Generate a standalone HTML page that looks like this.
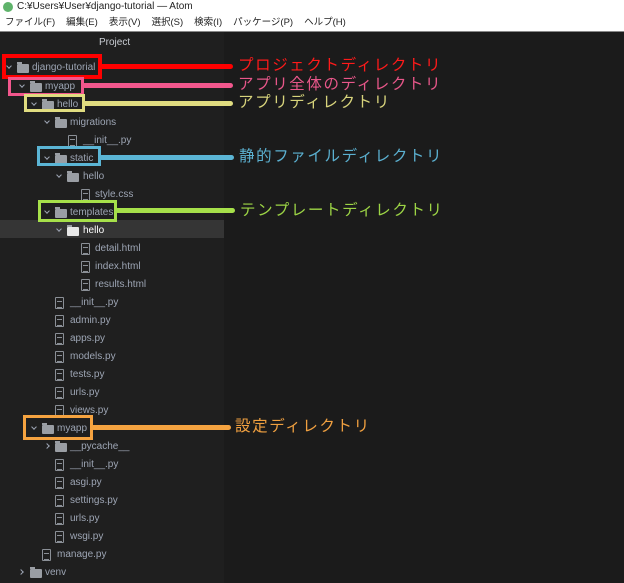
<!DOCTYPE html>
<html><head><meta charset="utf-8"><style>
*{margin:0;padding:0;box-sizing:border-box}
body{width:624px;height:583px;overflow:hidden;background:#1b1b1b;font-family:"Liberation Sans","Noto Sans CJK JP",sans-serif;position:relative}
#title{position:absolute;left:0;top:0;width:624px;height:14px;background:#fff;font-size:10px;color:#222;line-height:14px;padding-left:17px}
#logo{position:absolute;left:3px;top:2px;width:10px;height:10px;border-radius:50%;background:#5fb36b}
#menu{position:absolute;left:0;top:14px;width:624px;height:17px;background:#fff;font-size:9.5px;color:#222;line-height:17px;padding-left:5px;word-spacing:0}
#menu span{margin-right:11px}
#line{position:absolute;left:0;top:31px;width:624px;height:1px;background:#888}
#side{position:absolute;left:0;top:32px;width:224px;height:551px;background:#1f1f1f}
#proj{position:absolute;left:99px;top:37px;font-size:10px;color:#c8ccd2}
.r{position:absolute;height:18px;font-size:10px;color:#9da5b4;line-height:18px;white-space:nowrap;margin-top:2px}
.a{position:absolute;width:4px;height:4px;border-right:1.5px solid #9da5b4;border-bottom:1.5px solid #9da5b4;transform:rotate(45deg);margin-top:1px;margin-left:1px}
.a.c{transform:rotate(-45deg);margin-top:2px}
.f{position:absolute;width:12px;height:9px;background:#9a9ea4;border-radius:1px;margin-top:1px}
.f:before{content:"";position:absolute;left:0;top:-2px;width:5px;height:2px;background:#9a9ea4}
.d{position:absolute;width:9px;height:12px;border:1.3px solid #8a8f96;border-radius:1px;margin-top:1px}
.d:after{content:"";position:absolute;left:1px;top:3px;width:5px;height:5px;border-top:1px solid #8a8f96;border-bottom:1px solid #8a8f96}
.box{position:absolute;border-style:solid}
.ln{position:absolute;height:5px;border-radius:3px}
.lab{position:absolute;font-size:15.5px;letter-spacing:1.6px;white-space:nowrap;line-height:18px}
#hl{position:absolute;left:0;top:220px;width:224px;height:18px;background:#353535}
</style></head><body>
<div id="title"><div id="logo"></div>C:¥Users¥User¥django-tutorial — Atom</div>
<div id="menu"><span>ファイル(F)</span><span>編集(E)</span><span>表示(V)</span><span>選択(S)</span><span>検索(I)</span><span>パッケージ(P)</span><span>ヘルプ(H)</span></div>
<div id="line"></div>
<div id="side"></div>
<div id="hl"></div>
<div id="proj">Project</div>

<div class="a" style="left:6px;top:63px"></div><div class="f" style="left:17px;top:63px"></div><div class="r" style="left:32px;top:57px">django-tutorial</div>
<div class="a" style="left:19px;top:82px"></div><div class="f" style="left:30px;top:82px"></div><div class="r" style="left:45px;top:76px">myapp</div>
<div class="a" style="left:31px;top:100px"></div><div class="f" style="left:42px;top:100px"></div><div class="r" style="left:57px;top:94px">hello</div>
<div class="a" style="left:44px;top:118px"></div><div class="f" style="left:55px;top:118px"></div><div class="r" style="left:70px;top:112px">migrations</div>
<div class="d" style="left:68px;top:134px"></div><div class="r" style="left:83px;top:130px">__init__.py</div>
<div class="a" style="left:44px;top:154px"></div><div class="f" style="left:55px;top:154px"></div><div class="r" style="left:70px;top:148px">static</div>
<div class="a" style="left:56px;top:172px"></div><div class="f" style="left:67px;top:172px"></div><div class="r" style="left:83px;top:166px">hello</div>
<div class="d" style="left:81px;top:188px"></div><div class="r" style="left:95px;top:184px">style.css</div>
<div class="a" style="left:44px;top:208px"></div><div class="f" style="left:55px;top:208px"></div><div class="r" style="left:70px;top:202px">templates</div>
<div class="a" style="left:56px;top:226px"></div><div class="f" style="left:67px;top:226px;background:#e8e8e8"></div><div class="r" style="left:83px;top:220px;color:#fff">hello</div>
<div class="d" style="left:81px;top:242px"></div><div class="r" style="left:95px;top:238px">detail.html</div>
<div class="d" style="left:81px;top:260px"></div><div class="r" style="left:95px;top:256px">index.html</div>
<div class="d" style="left:81px;top:278px"></div><div class="r" style="left:95px;top:274px">results.html</div>
<div class="d" style="left:55px;top:296px"></div><div class="r" style="left:70px;top:292px">__init__.py</div>
<div class="d" style="left:55px;top:314px"></div><div class="r" style="left:70px;top:310px">admin.py</div>
<div class="d" style="left:55px;top:332px"></div><div class="r" style="left:70px;top:328px">apps.py</div>
<div class="d" style="left:55px;top:350px"></div><div class="r" style="left:70px;top:346px">models.py</div>
<div class="d" style="left:55px;top:368px"></div><div class="r" style="left:70px;top:364px">tests.py</div>
<div class="d" style="left:55px;top:386px"></div><div class="r" style="left:70px;top:382px">urls.py</div>
<div class="d" style="left:55px;top:404px"></div><div class="r" style="left:70px;top:400px">views.py</div>
<div class="a" style="left:31px;top:424px"></div><div class="f" style="left:42px;top:424px"></div><div class="r" style="left:57px;top:418px">myapp</div>
<div class="a c" style="left:44px;top:442px"></div><div class="f" style="left:55px;top:442px"></div><div class="r" style="left:70px;top:436px">__pycache__</div>
<div class="d" style="left:55px;top:458px"></div><div class="r" style="left:70px;top:454px">__init__.py</div>
<div class="d" style="left:55px;top:476px"></div><div class="r" style="left:70px;top:472px">asgi.py</div>
<div class="d" style="left:55px;top:494px"></div><div class="r" style="left:70px;top:490px">settings.py</div>
<div class="d" style="left:55px;top:512px"></div><div class="r" style="left:70px;top:508px">urls.py</div>
<div class="d" style="left:55px;top:530px"></div><div class="r" style="left:70px;top:526px">wsgi.py</div>
<div class="d" style="left:42px;top:548px"></div><div class="r" style="left:57px;top:544px">manage.py</div>
<div class="a c" style="left:18px;top:568px"></div><div class="f" style="left:30px;top:568px"></div><div class="r" style="left:45px;top:562px">venv</div>

<div class="box" style="left:2px;top:54px;width:100px;height:25px;border-width:4px;border-color:#ff0000"></div>
<div class="ln" style="left:100px;top:64px;width:133px;background:#ff0000"></div>
<div class="lab" style="left:238px;top:57px;color:#ff1a1a">プロジェクトディレクトリ</div>

<div class="box" style="left:8px;top:77px;width:76px;height:19px;border-width:3px;border-color:#f2578d"></div>
<div class="ln" style="left:82px;top:83px;width:151px;background:#f2578d"></div>
<div class="lab" style="left:238px;top:76px;color:#e8578a">アプリ全体のディレクトリ</div>

<div class="box" style="left:24px;top:94px;width:61px;height:18px;border-width:3px;border-color:#e0dc80"></div>
<div class="ln" style="left:83px;top:101px;width:150px;background:#e0dc80"></div>
<div class="lab" style="left:238px;top:94px;color:#d8d47c">アプリディレクトリ</div>

<div class="box" style="left:37px;top:146px;width:64px;height:20px;border-width:3px;border-color:#5bb5d5"></div>
<div class="ln" style="left:99px;top:155px;width:135px;background:#5bb5d5"></div>
<div class="lab" style="left:239px;top:148px;color:#5bb0d0">静的ファイルディレクトリ</div>

<div class="box" style="left:38px;top:200px;width:79px;height:22px;border-width:3px;border-color:#a6e04a"></div>
<div class="ln" style="left:115px;top:208px;width:120px;background:#a6e04a"></div>
<div class="lab" style="left:240px;top:202px;color:#9cd445">テンプレートディレクトリ</div>

<div class="box" style="left:23px;top:415px;width:70px;height:25px;border-width:3px;border-color:#f5a340"></div>
<div class="ln" style="left:91px;top:425px;width:140px;background:#f5a340"></div>
<div class="lab" style="left:235px;top:418px;color:#f0a040">設定ディレクトリ</div>
</body></html>
